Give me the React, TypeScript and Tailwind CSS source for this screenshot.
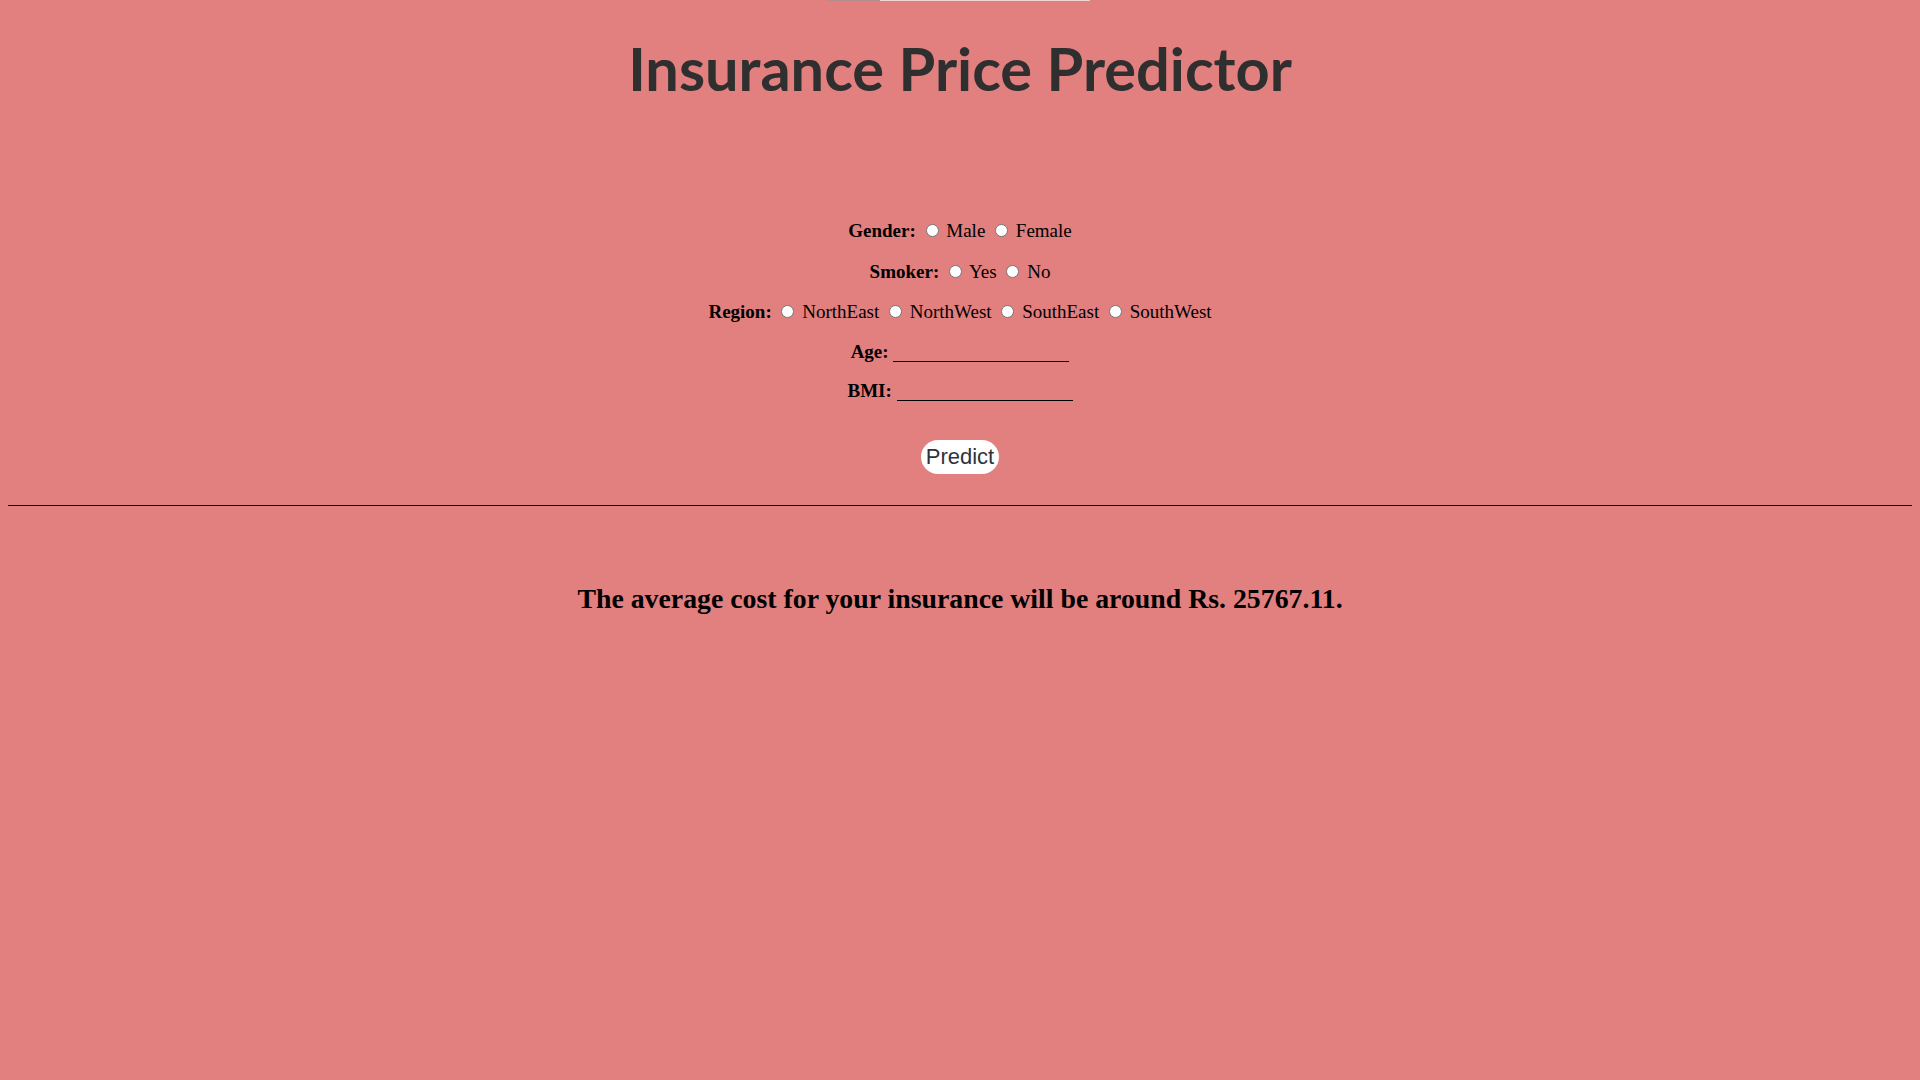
import React from "react";

function Radio() {
  return (
    <span className="inline-block align-baseline w-[13px] h-[13px] rounded-full bg-white border border-[#767676] box-border ml-[5px] mr-[3px]" />
  );
}

function Field({ w }: { w: string }) {
  return (
    <input
      type="text"
      className={`${w} box-border bg-transparent border-0 border-b border-black px-[2px] pt-[1px] pb-0 text-[13.333px] leading-[11px] outline-none align-baseline`}
      style={{ fontFamily: '"Liberation Sans", Arial, sans-serif' }}
    />
  );
}

export default function App() {
  return (
    <div
      className="min-h-screen w-full bg-[#e27f7f] text-black"
      style={{ fontFamily: '"Liberation Serif", "Times New Roman", serif' }}
    >
      <div className="flex h-px">
        <div className="w-[827px]" />
        <div className="w-[53px] bg-[#b58c8c]" />
        <div className="w-[210px] bg-[#f2d4d4]" />
      </div>
      <div className="pt-[38px] text-center">
        <h1
          className="text-[59.5px] leading-none font-bold text-[#2f2f2f]"
          style={{ fontFamily: "Lato, sans-serif" }}
        >
          Insurance Price Predictor
        </h1>
      </div>
      <div className="mt-[122px] flex flex-col items-center text-[19px] leading-[20px]">
        <div className="h-[20px] text-center whitespace-nowrap">
          <b>Gender:</b> <Radio /> Male <Radio /> Female
        </div>
        <div className="mt-[21px] h-[20px] text-center whitespace-nowrap">
          <b>Smoker:</b> <Radio /> Yes <Radio /> No
        </div>
        <div className="mt-[20px] h-[20px] text-center whitespace-nowrap">
          <b>Region:</b> <Radio /> NorthEast <Radio /> NorthWest <Radio /> SouthEast <Radio /> SouthWest
        </div>
        <div className="mt-[20px] h-[20px] text-center whitespace-nowrap">
          <b>Age:</b> <Field w="w-[176px]" />
        </div>
        <div className="mt-[19px] h-[20px] text-center whitespace-nowrap">
          <b>BMI:</b> <Field w="w-[176px]" />
        </div>
        <button
          className="mt-[39px] w-[78px] h-[34px] rounded-full bg-white text-[22px] leading-none text-[#30343a] flex items-center justify-center"
          style={{ fontFamily: '"Liberation Sans", Arial, sans-serif' }}
        >
          Predict
        </button>
      </div>
      <div className="mx-2 mt-[31px] border-t border-black" />
      <div className="mt-[77px] text-center">
        <h3 className="text-[27.8px] leading-[32px] font-bold">
          The average cost for your insurance will be around Rs. 25767.11.
        </h3>
      </div>
    </div>
  );
}
